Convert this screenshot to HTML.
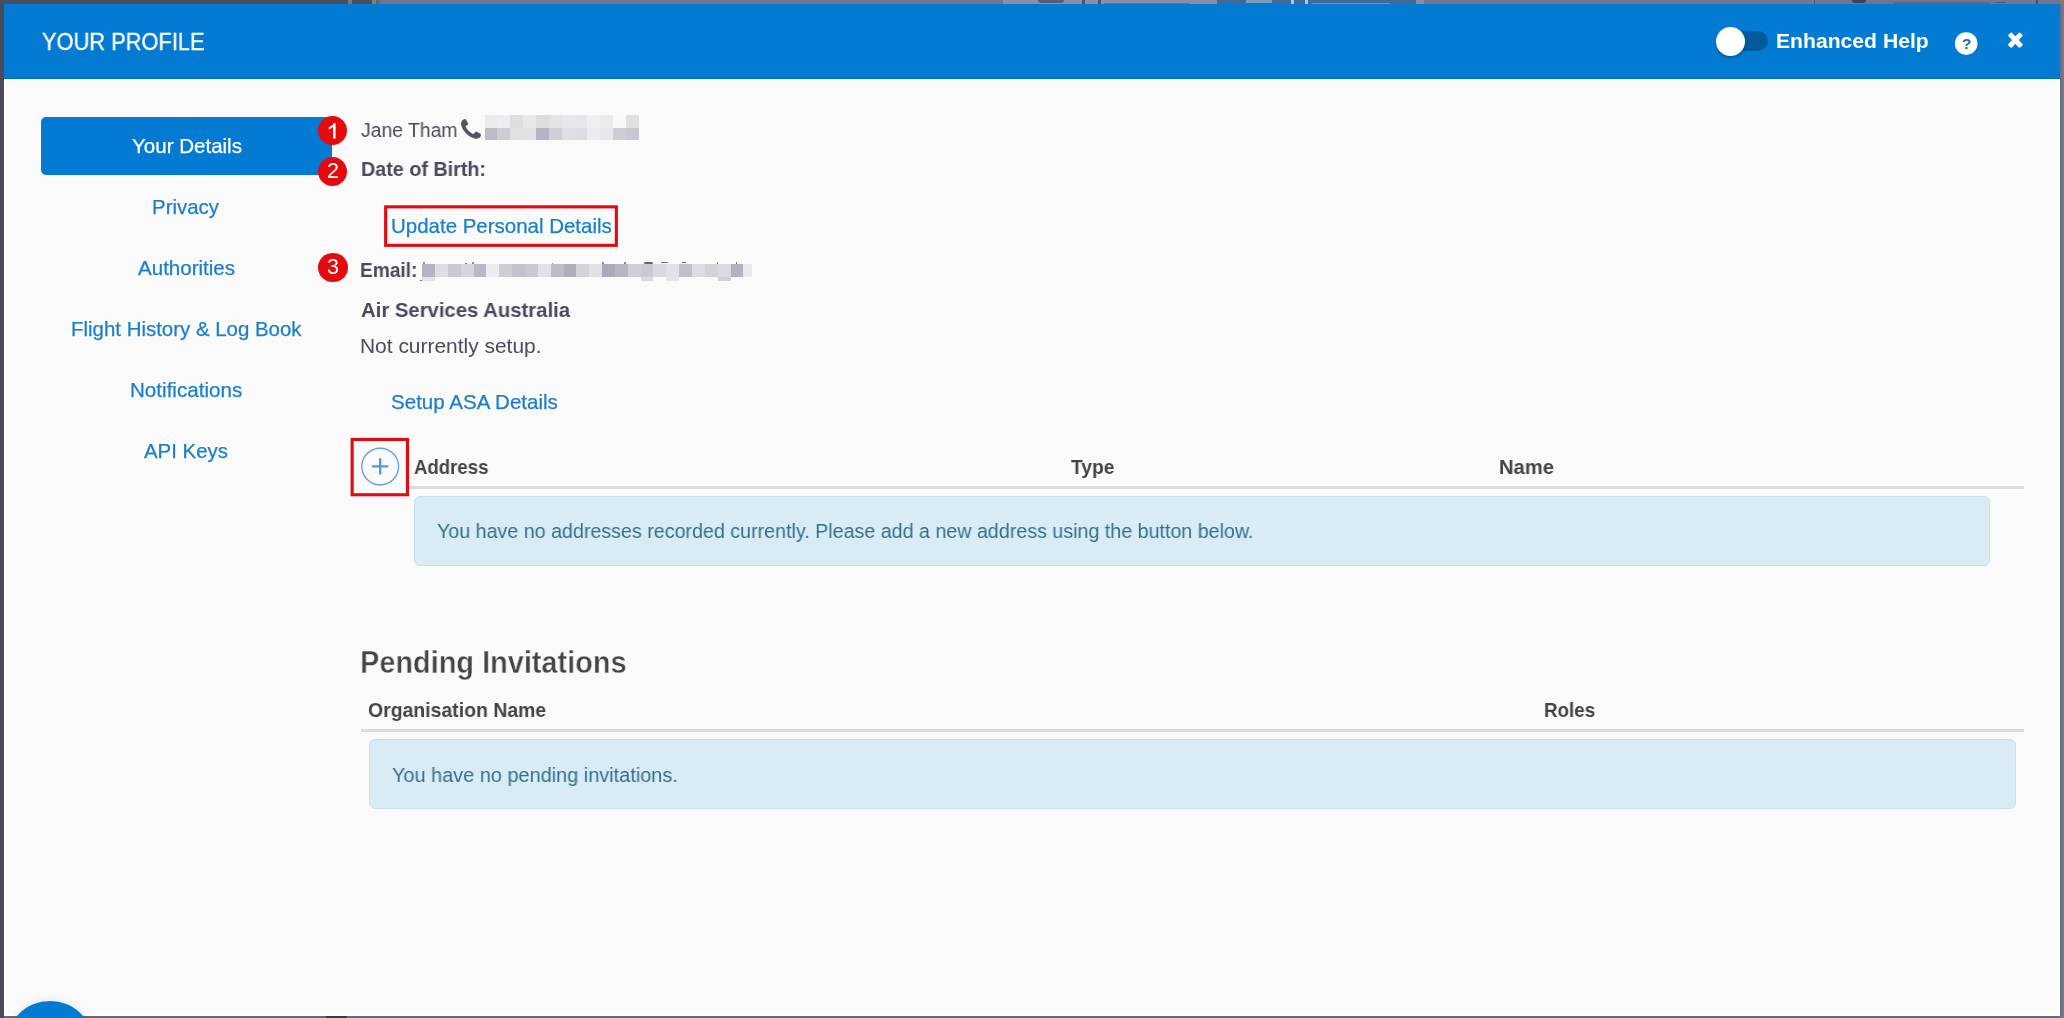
<!DOCTYPE html>
<html>
<head>
<meta charset="utf-8">
<title>Your Profile</title>
<style>
html,body{margin:0;padding:0;}
body{width:2064px;height:1018px;overflow:hidden;position:relative;background:#4b4e60;font-family:"Liberation Sans",sans-serif;}
.abs{position:absolute;}
.t{position:absolute;white-space:nowrap;line-height:1;transform-origin:left top;will-change:transform;}
.lato{color:#4a4a5e;}
.link{color:#1a80c6;}
/* backdrop */
/* modal */
#modal{left:4px;top:4px;width:2056px;height:1012px;background:#ffffff;overflow:hidden;}
#mbody{left:1.5px;top:75px;width:2053.2px;height:935px;background:#fafafa;}
#hdr{left:0;top:0;width:2056px;height:74px;background:#037bd2;border-bottom:1px solid #0668b1;}
.nav-active{left:37px;top:113px;width:291px;height:58px;background:#037bd2;border-radius:5px;}
.badge{position:absolute;width:29.4px;height:29.4px;border-radius:50%;background:#e50a0e;color:#fff;text-align:center;}
.alert{position:absolute;background:#d9ecf6;border:1px solid #c2e4ef;border-radius:6px;box-sizing:border-box;}
.hl{position:absolute;background:#dcdcdc;height:3px;}

</style>
</head>
<body>
<!-- dimmed backdrop slivers -->
<div class="abs" id="bd-top" style="left:0;top:0;width:2064px;height:4px;background:#4a4d60;"></div>
<div class="abs" style="left:348px;top:0;width:4px;height:4px;background:#85766f;"></div>
<div class="abs" style="left:372px;top:0;width:4px;height:4px;background:#8a7c72;"></div>
<div class="abs" style="left:376px;top:0;width:6px;height:4px;background:linear-gradient(90deg,#5a5c72,#737690);"></div>
<div class="abs" id="bd-top2" style="left:382px;top:0;width:1682px;height:4px;background:#737690;"></div>
<div class="abs" style="left:1003px;top:0;width:214px;height:4px;background:#8c8ea6;"></div>
<div class="abs" style="left:1038px;top:0;width:26px;height:3px;background:#4e5168;border-radius:0 0 9px 9px;opacity:.8"></div>
<div class="abs" style="left:1082px;top:0;width:3px;height:4px;background:#4e5168;"></div>
<div class="abs" style="left:1098px;top:0;width:3px;height:4px;background:#4e5168;"></div>
<div class="abs" style="left:1104px;top:3px;width:86px;height:1px;background:#6c6e88;"></div>
<div class="abs" style="left:1217px;top:0;width:199px;height:4px;background:#3f6a98;"></div>
<div class="abs" style="left:1246px;top:0;width:26px;height:3px;background:#9db2cc;opacity:.7"></div>
<div class="abs" style="left:1291px;top:0;width:3px;height:4px;background:#b4c4d8;"></div>
<div class="abs" style="left:1305px;top:0;width:3px;height:4px;background:#b4c4d8;"></div>
<div class="abs" style="left:1312px;top:3px;width:78px;height:1px;background:#6f8fb3;"></div>
<div class="abs" style="left:1416px;top:0;width:8px;height:4px;background:#8c8ea6;"></div>
<div class="abs" style="left:1814px;top:0;width:1px;height:4px;background:#55586e;"></div>
<div class="abs" style="left:1852px;top:0;width:14px;height:3px;background:#3d4058;border-radius:0 0 6px 6px;"></div>
<div class="abs" style="left:1893px;top:2px;width:96px;height:2px;background:#5e6179;opacity:.8"></div>
<div class="abs" style="left:1996px;top:2px;width:10px;height:1px;background:#55586e;"></div>
<div class="abs" style="left:2036px;top:0;width:2px;height:4px;background:#4d5066;"></div>
<div class="abs" style="left:2060px;top:0;width:3px;height:3px;background:#8c7a7a;"></div>
<!-- right / bottom / left slivers -->
<div class="abs" style="left:2060px;top:4px;width:4px;height:1014px;background:#74788c;"></div>
<div class="abs" style="left:2060px;top:4px;width:1.6px;height:1014px;background:#6b6e80;"></div>
<div class="abs" style="left:0;top:4px;width:4px;height:1014px;background:#484a5b;"></div>
<div class="abs" style="left:3.5px;top:4px;width:.5px;height:1012px;background:#2e303d;"></div>

<div class="abs" id="modal">
  <div class="abs" id="hdr"></div>
  <div class="abs" id="mbody"></div>
</div>

<!-- header text (page coords) -->

<!-- toggle -->
<div class="abs" id="track" style="left:1716px;top:31px;width:52px;height:20px;border-radius:10px;background:#035b9c;"></div>
<div class="abs" id="knob" style="left:1716px;top:27px;width:29px;height:29px;border-radius:50%;background:#fff;box-shadow:0 2px 3px rgba(0,0,0,0.25);"></div>

<!-- help icon -->
<svg class="abs" id="helpc" style="left:1953px;top:31px;" width="26" height="26" viewBox="1953 31 26 26"><circle cx="1966.2" cy="43.6" r="11.3" fill="#fff"/></svg>
<span class="t" id="helpq" style="left:1961.8px;top:35.5px;font-size:15.5px;font-weight:700;color:#0b6dba;">?</span>
<!-- close X -->
<svg class="abs" id="closex" style="left:2004px;top:29px;" width="24" height="24" viewBox="2004 29 24 24"><g fill="#fff" transform="translate(2015.4,40.1)"><rect x="-8.7" y="-2.5" width="17.4" height="5" rx="1.3" transform="rotate(47.3)"/><rect x="-8.7" y="-2.5" width="17.4" height="5" rx="1.3" transform="rotate(-47.3)"/></g></svg>

<!-- sidebar -->
<div class="abs nav-active" style="left:41px;top:117px;"></div>

<!-- badges -->
<div class="badge" id="b1" style="left:318px;top:115.6px;"></div>
<svg class="abs" id="b1t" style="left:325px;top:120px;" width="16" height="22" viewBox="325 120 16 22"><path fill="#fff" d="M333.0 123 H335.6 V138.5 H333.0 V126.8 C332.2 127.7 330.6 128.8 328.8 129.5 V127.3 C331 126.4 333 124.8 333.9 123 Z"/></svg>
<div class="badge" id="b2" style="left:318px;top:156.5px;"></div>
<span class="t" id="b2t" style="left:326.7px;top:161.2px;font-size:21.5px;color:#fff;">2</span>
<div class="badge" id="b3" style="left:318.3px;top:252.6px;"></div>
<span class="t" id="b3t" style="left:326.9px;top:257.0px;font-size:21.5px;color:#fff;">3</span>

<!-- details -->
<svg class="abs redbox" id="rb1" style="left:380px;top:200px;" width="244" height="52" viewBox="380 200 244 52"><rect x="385.65" y="206.85" width="230.7" height="38.5" fill="none" stroke="#e2090f" stroke-width="3.1"/></svg>

<!-- phone icon + redacted blocks -->
<svg class="abs" id="phone" style="left:461.2px;top:119.1px;" width="20" height="19.7" viewBox="0 0 1408 1408" preserveAspectRatio="none"><g transform="translate(0,1408) scale(1,-1)"><path fill="#50536f" d="M1408 296q0 -27 -10 -70.500t-21 -68.500q-21 -50 -122 -106q-94 -51 -186 -51q-27 0 -52.500 3.500t-57.500 12.500t-47.500 14.500t-55.500 20.500t-49 18q-98 35 -175 83q-128 79 -264.500 215.500t-215.500 264.500q-48 77 -83 175q-3 9 -18 49t-20.500 55.500t-14.500 47.500t-12.500 57.500 t-3.500 52.500q0 92 51 186q56 101 106 122q25 11 68.500 21t70.500 10q14 0 21 -3q18 -6 53 -76q11 -19 30 -54t35 -63.500t31 -53.500q3 -4 17.500 -25t21.500 -35.500t7 -28.500q0 -20 -28.500 -50t-62 -55t-62 -53t-28.500 -46q0 -9 5 -22.500t8.500 -20.500t14 -24t11.500 -19 q76 -137 174 -235t235 -174q2 -1 19 -11.500t24 -14t20.500 -8.500t22.500 -5q18 0 46 28.500t53 62t55 62t50 28.500q14 0 28.500 -7t35.500 -21.500t25 -17.500q25 -15 53.500 -31t63.500 -35t54 -30q70 -35 76 -53q3 -7 3 -21z"/></g></svg>
<div class="abs" id="pblk" style="left:484.6px;top:115px;width:154.3px;height:25px;"><i style="position:absolute;left:0.00px;top:0;width:13.16px;height:12.9px;background:#ebebee"></i><i style="position:absolute;left:0.00px;top:12.9px;width:13.16px;height:12.1px;background:#bcbcc8"></i><i style="position:absolute;left:12.86px;top:0;width:13.16px;height:12.9px;background:#eeeef1"></i><i style="position:absolute;left:12.86px;top:12.9px;width:13.16px;height:12.1px;background:#cdcdd6"></i><i style="position:absolute;left:25.72px;top:0;width:13.16px;height:12.9px;background:#dddde2"></i><i style="position:absolute;left:25.72px;top:12.9px;width:13.16px;height:12.1px;background:#e0e0e5"></i><i style="position:absolute;left:38.57px;top:0;width:13.16px;height:12.9px;background:#e8e8ec"></i><i style="position:absolute;left:38.57px;top:12.9px;width:13.16px;height:12.1px;background:#e1e1e6"></i><i style="position:absolute;left:51.43px;top:0;width:13.16px;height:12.9px;background:#dcdce1"></i><i style="position:absolute;left:51.43px;top:12.9px;width:13.16px;height:12.1px;background:#b4b4c2"></i><i style="position:absolute;left:64.29px;top:0;width:13.16px;height:12.9px;background:#e4e4e8"></i><i style="position:absolute;left:64.29px;top:12.9px;width:13.16px;height:12.1px;background:#cfcfd8"></i><i style="position:absolute;left:77.15px;top:0;width:13.16px;height:12.9px;background:#e8e8eb"></i><i style="position:absolute;left:77.15px;top:12.9px;width:13.16px;height:12.1px;background:#dedee3"></i><i style="position:absolute;left:90.01px;top:0;width:13.16px;height:12.9px;background:#e6e6ea"></i><i style="position:absolute;left:90.01px;top:12.9px;width:13.16px;height:12.1px;background:#dcdce2"></i><i style="position:absolute;left:102.87px;top:0;width:13.16px;height:12.9px;background:#efeff1"></i><i style="position:absolute;left:102.87px;top:12.9px;width:13.16px;height:12.1px;background:#ececef"></i><i style="position:absolute;left:115.72px;top:0;width:13.16px;height:12.9px;background:#ebebee"></i><i style="position:absolute;left:115.72px;top:12.9px;width:13.16px;height:12.1px;background:#e8e8ec"></i><i style="position:absolute;left:128.58px;top:0;width:13.16px;height:12.9px;background:#f8f8f9"></i><i style="position:absolute;left:128.58px;top:12.9px;width:13.16px;height:12.1px;background:#cdcdd6"></i><i style="position:absolute;left:141.44px;top:0;width:13.16px;height:12.9px;background:#dfdfe4"></i><i style="position:absolute;left:141.44px;top:12.9px;width:13.16px;height:12.1px;background:#c8c8d2"></i></div>
<div class="abs" id="eblk" style="left:422.2px;top:264px;width:330px;height:18px;overflow:hidden;"><i style="position:absolute;left:0.00px;top:0;width:13.15px;height:13.1px;background:#b5b5c2"></i><i style="position:absolute;left:12.85px;top:0;width:13.15px;height:13.1px;background:#dddde3"></i><i style="position:absolute;left:25.70px;top:0;width:13.15px;height:13.1px;background:#c9c9d3"></i><i style="position:absolute;left:38.55px;top:0;width:13.15px;height:13.1px;background:#d5d5dd"></i><i style="position:absolute;left:51.40px;top:0;width:13.15px;height:13.1px;background:#b9b9c6"></i><i style="position:absolute;left:64.25px;top:0;width:13.15px;height:13.1px;background:#ececef"></i><i style="position:absolute;left:77.10px;top:0;width:13.15px;height:13.1px;background:#cdcdd6"></i><i style="position:absolute;left:89.95px;top:0;width:13.15px;height:13.1px;background:#c2c2ce"></i><i style="position:absolute;left:102.80px;top:0;width:13.15px;height:13.1px;background:#c9c9d3"></i><i style="position:absolute;left:115.65px;top:0;width:13.15px;height:13.1px;background:#e1e1e7"></i><i style="position:absolute;left:128.50px;top:0;width:13.15px;height:13.1px;background:#bcbcc9"></i><i style="position:absolute;left:141.35px;top:0;width:13.15px;height:13.1px;background:#aeaebd"></i><i style="position:absolute;left:154.20px;top:0;width:13.15px;height:13.1px;background:#d3d3db"></i><i style="position:absolute;left:167.05px;top:0;width:13.15px;height:13.1px;background:#e0e0e6"></i><i style="position:absolute;left:179.90px;top:0;width:13.15px;height:13.1px;background:#a9a9ba"></i><i style="position:absolute;left:192.75px;top:0;width:13.15px;height:13.1px;background:#b5b5c4"></i><i style="position:absolute;left:205.60px;top:0;width:13.15px;height:13.1px;background:#cfcfd9"></i><i style="position:absolute;left:218.45px;top:0;width:13.15px;height:13.1px;background:#c9c9d4"></i><i style="position:absolute;left:231.30px;top:0;width:13.15px;height:13.1px;background:#d9d9e0"></i><i style="position:absolute;left:244.15px;top:0;width:13.15px;height:13.1px;background:#e2e2e7"></i><i style="position:absolute;left:257.00px;top:0;width:13.15px;height:13.1px;background:#c0c0cc"></i><i style="position:absolute;left:269.85px;top:0;width:13.15px;height:13.1px;background:#dcdce3"></i><i style="position:absolute;left:282.70px;top:0;width:13.15px;height:13.1px;background:#d3d3db"></i><i style="position:absolute;left:295.55px;top:0;width:13.15px;height:13.1px;background:#dadae1"></i><i style="position:absolute;left:308.40px;top:0;width:13.15px;height:13.1px;background:#b2b2c1"></i><i style="position:absolute;left:321.25px;top:0;width:13.15px;height:13.1px;background:#e9e9ed"></i><i style="position:absolute;left:0.00px;top:13.1px;width:12.85px;height:3.6px;background:#e2e2e8"></i><i style="position:absolute;left:218.45px;top:13.1px;width:12.85px;height:3.6px;background:#dadae0"></i><i style="position:absolute;left:244.15px;top:13.1px;width:12.85px;height:3.6px;background:#e4e4e9"></i><i style="position:absolute;left:295.55px;top:13.1px;width:12.85px;height:3.6px;background:#cfcfd8"></i></div>
<i class="abs" style="left:422.6px;top:262.3px;width:2.2px;height:1.6px;background:#4a4a5e;border-radius:1px;opacity:.85"></i><i class="abs" style="left:465.4px;top:262.8px;width:1.6px;height:1.2px;background:#4a4a5e;border-radius:1px;opacity:.85"></i><i class="abs" style="left:471.8px;top:262.3px;width:2.2px;height:1.6px;background:#4a4a5e;border-radius:1px;opacity:.85"></i><i class="abs" style="left:551.5px;top:262.8px;width:1.6px;height:1.2px;background:#4a4a5e;border-radius:1px;opacity:.85"></i><i class="abs" style="left:602.4px;top:262.3px;width:1.6px;height:1.6px;background:#4a4a5e;border-radius:1px;opacity:.85"></i><i class="abs" style="left:624.2px;top:262.3px;width:1.6px;height:1.6px;background:#4a4a5e;border-radius:1px;opacity:.85"></i><i class="abs" style="left:643.5px;top:262.2px;width:9px;height:1.4px;background:#4a4a5e;border-radius:1px;opacity:.85"></i><i class="abs" style="left:661px;top:261.8px;width:7px;height:1.5px;background:#4a4a5e;border-radius:1px;opacity:.85"></i><i class="abs" style="left:681.5px;top:262px;width:4px;height:1.4px;background:#4a4a5e;border-radius:1px;opacity:.85"></i><i class="abs" style="left:716.8px;top:262.3px;width:1.6px;height:1.6px;background:#4a4a5e;border-radius:1px;opacity:.85"></i><i class="abs" style="left:735.6px;top:262.3px;width:1.6px;height:1.6px;background:#4a4a5e;border-radius:1px;opacity:.85"></i><i class="abs" style="left:420.3px;top:279.8px;width:1.6px;height:1.2px;background:#4a4a5e;border-radius:1px;opacity:.85"></i>

<!-- address table -->
<svg class="abs redbox" id="rb2" style="left:346px;top:433px;" width="68" height="68" viewBox="346 433 68 68"><rect x="352.15" y="439.45" width="55.3" height="55.3" fill="none" stroke="#e2090f" stroke-width="3.1"/></svg>
<svg class="abs" id="plus" style="left:360px;top:446px;" width="41" height="41" viewBox="360 446 41 41"><circle cx="380.2" cy="466.6" r="18.4" fill="none" stroke="#5fa5db" stroke-width="1.4"/><path d="M372.1 466.4 H388.3 M380.2 458.3 V474.5" stroke="#4c9bd8" stroke-width="2.3" fill="none"/></svg>
<div class="hl" style="left:409px;top:486px;width:1615px;"></div>
<div class="alert" id="al1" style="left:414px;top:496px;width:1576px;height:69.5px;"></div>

<!-- pending invitations -->
<div class="hl" style="left:361px;top:729px;width:1663px;"></div>
<div class="alert" id="al2" style="left:369px;top:739px;width:1647px;height:70px;"></div>

<!-- TEXTS -->
<span class="t" id="title" style="left:42.00px;top:29.58px;font-size:24px;color:#fff;transform:scaleX(0.9096);-webkit-text-stroke:0.3px #fff;">YOUR PROFILE</span>
<span class="t" id="eh" style="left:1776.00px;top:31.22px;font-size:20.3px;font-weight:700;color:#fff;transform:scaleX(1.0423);">Enhanced Help</span>
<span class="t" id="n0" style="left:132.00px;top:135.73px;font-size:20.4px;color:#fff;transform:scaleX(1.0068);-webkit-text-stroke:0.25px #fff;">Your Details</span>
<span class="t" id="n1" style="left:152.00px;top:196.73px;font-size:20.4px;color:#1b7fc7;transform:scaleX(1.0023);-webkit-text-stroke:0.25px #1b7fc7;">Privacy</span>
<span class="t" id="n2" style="left:138.00px;top:257.73px;font-size:20.4px;color:#1b7fc7;transform:scaleX(1.0076);-webkit-text-stroke:0.25px #1b7fc7;">Authorities</span>
<span class="t" id="n3" style="left:71.00px;top:318.73px;font-size:20.4px;color:#1b7fc7;transform:scaleX(1.0022);-webkit-text-stroke:0.25px #1b7fc7;">Flight History &amp; Log Book</span>
<span class="t" id="n4" style="left:130.00px;top:380.13px;font-size:20.4px;color:#1b7fc7;transform:scaleX(1.0101);-webkit-text-stroke:0.25px #1b7fc7;">Notifications</span>
<span class="t" id="n5" style="left:144.00px;top:441.23px;font-size:20.4px;color:#1b7fc7;transform:scaleX(0.9993);-webkit-text-stroke:0.25px #1b7fc7;">API Keys</span>
<span class="t" id="d0" style="left:361.00px;top:120.45px;font-size:20.5px;color:#4a4a5e;transform:scaleX(0.9449);">Jane Tham</span>
<span class="t" id="d1" style="left:361.00px;top:159.25px;font-size:20.5px;font-weight:700;color:#4a4a5e;transform:scaleX(0.9623);">Date of Birth:</span>
<span class="t" id="d2" style="left:391.00px;top:215.73px;font-size:20.4px;color:#1b7fc7;transform:scaleX(1.0040);-webkit-text-stroke:0.25px #1b7fc7;">Update Personal Details</span>
<span class="t" id="d3" style="left:360.00px;top:259.75px;font-size:20.5px;font-weight:700;color:#4a4a5e;transform:scaleX(0.9323);">Email:</span>
<span class="t" id="d4" style="left:361.00px;top:300.13px;font-size:20.4px;font-weight:700;color:#4a4a5e;transform:scaleX(0.9953);">Air Services Australia</span>
<span class="t" id="d5" style="left:360.00px;top:335.65px;font-size:20.5px;color:#4a4a5e;transform:scaleX(1.0212);">Not currently setup.</span>
<span class="t" id="d6" style="left:391.00px;top:391.63px;font-size:20.4px;color:#1b7fc7;transform:scaleX(1.0084);-webkit-text-stroke:0.25px #1b7fc7;">Setup ASA Details</span>
<span class="t" id="a0" style="left:414.00px;top:457.05px;font-size:20.5px;font-weight:700;color:#444444;transform:scaleX(0.9068);">Address</span>
<span class="t" id="a1" style="left:1071.00px;top:457.05px;font-size:20.5px;font-weight:700;color:#444444;transform:scaleX(0.9363);">Type</span>
<span class="t" id="a2" style="left:1499.00px;top:457.05px;font-size:20.5px;font-weight:700;color:#444444;transform:scaleX(0.9838);">Name</span>
<span class="t" id="a3" style="left:437.00px;top:520.95px;font-size:20.5px;color:#31708f;transform:scaleX(0.9591);">You have no addresses recorded currently. Please add a new address using the button below.</span>
<span class="t" id="p0" style="left:360.00px;top:646.56px;font-size:31px;font-weight:700;color:#444444;transform:scaleX(0.9324);-webkit-text-stroke:0.45px #fafafa;">Pending Invitations</span>
<span class="t" id="p1" style="left:368.00px;top:700.35px;font-size:20.5px;font-weight:700;color:#444444;transform:scaleX(0.9479);">Organisation Name</span>
<span class="t" id="p2" style="left:1544.00px;top:700.15px;font-size:20.5px;font-weight:700;color:#444444;transform:scaleX(0.9157);">Roles</span>
<span class="t" id="p3" style="left:392.00px;top:764.75px;font-size:20.5px;color:#31708f;transform:scaleX(0.9707);">You have no pending invitations.</span>
<!-- bottom sliver + chat bubble -->
<div class="abs" style="left:0;top:1016px;width:2064px;height:2px;background:#676976;"></div>
<div class="abs" style="left:0;top:1016px;width:4px;height:2px;background:#484a5b;"></div>
<div class="abs" style="left:326px;top:1016px;width:21px;height:2px;background:#363848;"></div>
<div class="abs" style="left:2060px;top:1016px;width:4px;height:2px;background:#74788c;"></div>
<div class="abs" id="chat" style="left:6px;top:1001px;width:88px;height:88px;border-radius:50%;background:#037bd2;box-shadow:0 0 9px rgba(0,0,0,0.10);"></div>
</body>
</html>
